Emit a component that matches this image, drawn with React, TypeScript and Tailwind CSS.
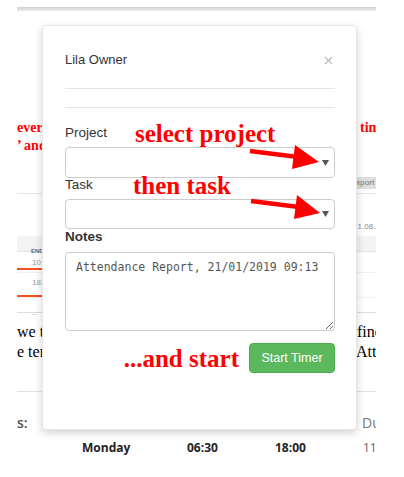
import React from "react";

const Caret = () => (
  <svg width="7" height="6" viewBox="0 0 7 6" className="shrink-0">
    <polygon points="0,0 7,0 3.5,6" fill="#555" />
  </svg>
);

const App = () => {
  return (
    <div className="relative h-[477px] w-[404px] overflow-hidden bg-white font-['Liberation_Sans',Arial,sans-serif]">
      {/* page behind the dialog */}
      <div className="ml-[17px] w-[359px] overflow-hidden whitespace-nowrap pt-[7px]">
        <div className="h-[4px] bg-gradient-to-b from-[#d2d2d2] to-[#ededed]" />
        <div className="mt-[108px] font-['Liberation_Serif',serif] text-[14px] font-bold leading-[18px] text-[#ff0000]">
          <div className="flex">
            <span className="w-[343px] shrink-0">every day at the</span>
            <span className="shrink-0">time</span>
          </div>
          <div className="flex">
            <span className="w-[343px] shrink-0">’ and then</span>
          </div>
        </div>
        <div className="flex h-[39px] border-b border-[#e6e6e6] pt-[22px]">
          <span className="ml-[331px] h-[12px] shrink-0 bg-[#dedede] px-[3px] text-[8px] leading-[12px] text-[#777]">Export</span>
        </div>
        <div className="mt-[28px] flex">
          <span className="ml-[325px] shrink-0 text-[8px] leading-[10px] text-[#888]">on 21.08.2019</span>
        </div>
        <div className="mt-[4px] h-[16px] border-b border-[#e4e4e4] bg-[#f3f3f3]">
          <span className="ml-[14px] text-[6px] font-bold leading-[16px] text-[#666]">END</span>
        </div>
        <div className="flex h-[21px] border-b border-[#f0f0f0]">
          <div className="flex w-[25px] shrink-0 flex-col">
            <span className="ml-[15px] mt-[6px] text-[8px] leading-[10px] text-[#999]">10:30</span>
            <div className="h-[2px] bg-[#f4511e]" />
          </div>
        </div>
        <div className="flex h-[25px] border-b border-[#f0f0f0]">
          <div className="flex w-[25px] shrink-0 flex-col">
            <span className="ml-[15px] mt-[5px] text-[8px] leading-[10px] text-[#999]">18:00</span>
            <div className="mt-[7px] h-[2px] bg-[#f4511e]" />
          </div>
        </div>
        <div className="h-[15px] border-b border-[#dcdcdc]">
          <span className="ml-[14px] text-[8px] leading-[12px] text-[#999]">...</span>
        </div>
        <div className="mt-[9px] font-['Liberation_Serif',serif] text-[16px] leading-[20px] text-black">
          <div className="flex">
            <span className="w-[340px] shrink-0">we tried</span>
            <span className="shrink-0">find</span>
          </div>
          <div className="flex">
            <span className="w-[339px] shrink-0">e terms</span>
            <span className="shrink-0">Attendance</span>
          </div>
        </div>
        <div className="mt-[29px] border-t border-[#e0e0e0] pt-[21px]">
          <div className="flex font-['Open_Sans',sans-serif] text-[14px] leading-[20px]">
            <span className="ml-[-34px] w-[379px] shrink-0 font-semibold text-[#555]">Hours:</span>
            <span className="shrink-0 text-[#777]">Duration</span>
          </div>
          <div className="mt-[5px] flex font-['Open_Sans',sans-serif] text-[12px] font-bold leading-[20px] text-[#222]">
            <span className="ml-[65px] w-[105px] shrink-0">Monday</span>
            <span className="w-[88px] shrink-0">06:30</span>
            <span className="w-[88px] shrink-0">18:00</span>
            <span className="shrink-0 font-normal text-[#666]">11:30</span>
          </div>
        </div>
      </div>

      {/* dialog */}
      <div className="absolute left-[42px] top-[25px] h-[405px] w-[315px] rounded-[4px] border border-[#e6e6e6] bg-white pl-[22px] pr-[21px] shadow-[0_3px_9px_rgba(0,0,0,0.18)]">
        <div className="flex h-[63px] items-start justify-between border-b border-[#e5e5e5] pt-[24px]">
          <span className="text-[13px] leading-[20px] text-[#333]">Lila Owner</span>
          <svg width="9" height="9" viewBox="0 0 9 9" className="mr-[2px] mt-[6px]">
            <path d="M1 1 L8 8 M8 1 L1 8" stroke="#bdbdbd" strokeWidth="1.2" />
          </svg>
        </div>
        <div className="h-[19px] border-b border-[#e5e5e5]" />

        <div className="mt-[15px] flex h-[20px] items-center">
          <span className="w-[70px] shrink-0 text-[13.5px] text-[#333]">Project</span>
          <span className="font-['Liberation_Serif',serif] text-[25px] font-bold leading-none text-[#ff0000]">select project</span>
        </div>
        <div className="mt-[4px] flex h-[31px] items-center justify-end rounded-[4px] border border-[#cccccc] pr-[5px]">
          <Caret />
        </div>

        <div className="flex h-[14px] items-center">
          <span className="w-[68px] shrink-0 text-[13.5px] text-[#333]">Task</span>
          <span className="font-['Liberation_Serif',serif] text-[25px] font-bold leading-none text-[#ff0000]">then task</span>
        </div>
        <div className="mt-[7px] flex h-[30px] items-center justify-end rounded-[4px] border border-[#cccccc] pr-[5px]">
          <Caret />
        </div>

        <div className="flex h-[16px] items-center">
          <span className="text-[13.5px] font-bold text-[#333]">Notes</span>
        </div>
        <textarea
          className="mt-[7px] block h-[79px] w-full rounded-[4px] border border-[#cccccc] px-[10px] pt-[6px] font-['DejaVu_Sans_Mono',monospace] text-[11.5px] leading-[16px] text-[#555] outline-none"
          defaultValue="Attendance Report, 21/01/2019 09:13"
        />

        <div className="mt-[12px] flex h-[30px] items-center justify-end gap-[10px]">
          <span className="font-['Liberation_Serif',serif] text-[25px] font-bold leading-none text-[#ff0000]">...and start</span>
          <button className="h-[30px] w-[86px] rounded-[4px] border border-[#4cae4c] bg-[#5cb85c] text-[12.5px] text-white">
            Start Timer
          </button>
        </div>
      </div>

      {/* arrows drawn over the dialog */}
      <svg width="404" height="477" className="pointer-events-none absolute left-0 top-0">
        <line x1="250" y1="151" x2="298" y2="157" stroke="#ff0000" strokeWidth="4.5" />
        <polygon points="319,162 295,145 292,169" fill="#ff0000" />
        <line x1="251" y1="201" x2="299" y2="207" stroke="#ff0000" strokeWidth="4.5" />
        <polygon points="320,213 297,195 294,219" fill="#ff0000" />
      </svg>
    </div>
  );
};

export default App;
